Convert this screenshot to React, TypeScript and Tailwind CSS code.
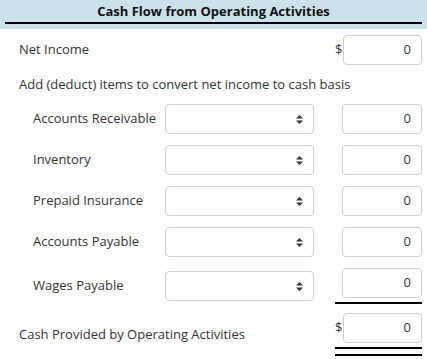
const items = [
  "Accounts Receivable",
  "Inventory",
  "Prepaid Insurance",
  "Accounts Payable",
];

function SortIcon() {
  return (
    <svg width="7" height="9" viewBox="0 0 7 9" className="text-[#333]">
      <path d="M3.5 0 L7 3.6 L0 3.6 Z" fill="currentColor" />
      <path d="M3.5 9 L7 5.4 L0 5.4 Z" fill="currentColor" />
    </svg>
  );
}

function SelectBox() {
  return (
    <div className="flex h-[30px] w-[149px] items-center justify-end rounded-[4px] border border-[#cfcfcf] bg-white pr-[10px]">
      <SortIcon />
    </div>
  );
}

function Amount({ dollar = false }: { dollar?: boolean }) {
  return (
    <div className="flex w-[87px] items-center justify-end">
      {dollar && <span className="mr-[1px] text-[13px] text-[#333]">$</span>}
      <div className="flex h-[30px] w-[80px] items-center justify-end rounded-[4px] border border-[#cfcfcf] bg-white pr-[10px] text-[13px] text-[#333]">
        0
      </div>
    </div>
  );
}

export default function App() {
  return (
    <div
      className="h-[359px] w-[427px] overflow-hidden bg-white text-[13px] text-[#333]"
      style={{ fontFamily: '"Open Sans", "Liberation Sans", sans-serif' }}
    >
      <div className="h-[29px] bg-[#cbe2ea] px-[5px]">
        <div className="flex h-[24px] items-center justify-center border-b-2 border-black pt-[1px] font-bold text-[#111]">
          Cash Flow from Operating Activities
        </div>
      </div>

      <div className="mt-[6px] flex items-center pr-[5px]">
        <div className="flex-1 pl-[19px]">Net Income</div>
        <Amount dollar />
      </div>

      <div className="mt-[10px] pl-[19px] leading-[18px]">
        Add (deduct) items to convert net income to cash basis
      </div>

      <div className="mt-[11px] flex flex-col gap-[11px] pr-[5px]">
        {items.map((label) => (
          <div key={label} className="flex items-center">
            <div className="flex-1 pl-[33px]">{label}</div>
            <SelectBox />
            <div className="w-[21px]" />
            <Amount />
          </div>
        ))}
        <div className="flex items-center">
          <div className="flex-1 pl-[33px]">Wages Payable</div>
          <SelectBox />
          <div className="w-[21px]" />
          <div className="flex flex-col">
            <Amount />
            <div className="mt-[4px] h-[2px] w-[87px] bg-black" />
          </div>
        </div>
      </div>

      <div className="mt-[9px] flex items-center pr-[5px]">
        <div className="flex-1 pl-[19px]">Cash Provided by Operating Activities</div>
        <div className="flex flex-col">
          <Amount dollar />
          <div className="mt-[4px] h-[2px] w-[87px] bg-black" />
          <div className="mt-[5px] h-[2px] w-[87px] bg-black" />
        </div>
      </div>
    </div>
  );
}
